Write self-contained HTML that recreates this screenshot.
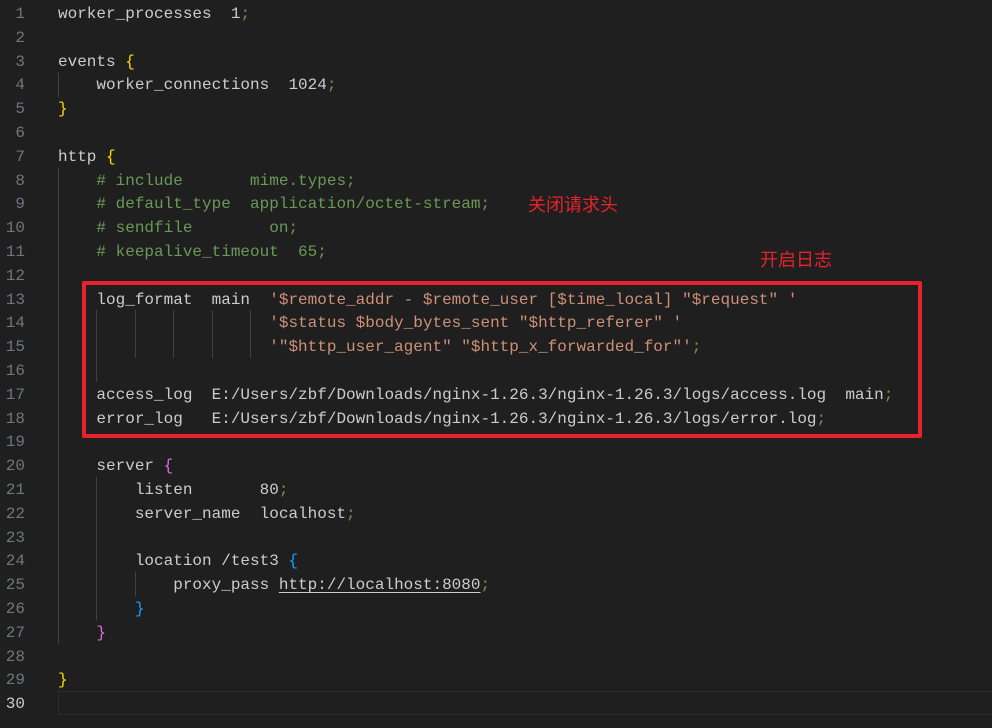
<!DOCTYPE html>
<html><head><meta charset="utf-8"><style>
html,body{margin:0;padding:0;background:#1f1f1f;width:992px;height:728px;overflow:hidden;}
.ln{position:absolute;left:0;width:25px;text-align:right;font:16px "Liberation Mono",monospace;color:#6e7681;height:24px;line-height:24px;}
.c{position:absolute;left:58px;font:16px "Liberation Mono",monospace;color:#cccccc;white-space:pre;height:24px;line-height:24px;}
.s{color:#ce9178}.cm{color:#6a9955}.p{color:#6a9955}
.y{color:#ffd700}.m{color:#da70d6}.b{color:#179fff}
.g{position:absolute;width:1px;background:#404040;}
.u{text-decoration:underline;text-underline-offset:3px}
.zh{position:absolute;font:18px "Noto Sans CJK SC",sans-serif;color:#e8222b;line-height:20px}
</style></head><body>
<div style="position:absolute;left:58px;top:691px;width:934px;height:22px;border:1px solid #2c2c2c;border-right:none"></div>
<div class="g" style="left:58px;top:73px;height:24px"></div>
<div class="g" style="left:58px;top:168px;height:476px"></div>
<div class="g" style="left:96px;top:310px;height:72px"></div>
<div class="g" style="left:135px;top:310px;height:48px"></div>
<div class="g" style="left:173px;top:310px;height:48px"></div>
<div class="g" style="left:212px;top:310px;height:48px"></div>
<div class="g" style="left:250px;top:310px;height:48px"></div>
<div class="g" style="left:96px;top:477px;height:143px"></div>
<div class="g" style="left:135px;top:572px;height:24px"></div>
<script>
var L=[
'worker_processes  1<span class="p">;</span>','',
'events <span class="y">{</span>','    worker_connections  1024<span class="p">;</span>','<span class="y">}</span>','',
'http <span class="y">{</span>',
'    <span class="cm"># include       mime.types;</span>',
'    <span class="cm"># default_type  application/octet-stream;</span>',
'    <span class="cm"># sendfile        on;</span>',
'    <span class="cm"># keepalive_timeout  65;</span>','',
'    log_format  main  <span class="s">\'$remote_addr - $remote_user [$time_local] "$request" \'</span>',
'                      <span class="s">\'$status $body_bytes_sent "$http_referer" \'</span>',
'                      <span class="s">\'"$http_user_agent" "$http_x_forwarded_for"\'</span><span class="p">;</span>','',
'    access_log  E:/Users/zbf/Downloads/nginx-1.26.3/nginx-1.26.3/logs/access.log  main<span class="p">;</span>',
'    error_log   E:/Users/zbf/Downloads/nginx-1.26.3/nginx-1.26.3/logs/error.log<span class="p">;</span>','',
'    server <span class="m">{</span>','        listen       80<span class="p">;</span>','        server_name  localhost<span class="p">;</span>','',
'        location /test3 <span class="b">{</span>','            proxy_pass <span class="u">http://localhost:8080</span><span class="p">;</span>',
'        <span class="b">}</span>','    <span class="m">}</span>','','<span class="y">}</span>',''];
var h='';
for(var i=0;i<30;i++){var t=2+i*23.8;
h+='<div class="ln" style="top:'+t+'px'+(i==29?';color:#cccccc':'')+'">'+(i+1)+'</div>';
h+='<div class="c" style="top:'+t+'px">'+L[i]+'</div>';}
document.write(h);
</script>
<div style="position:absolute;left:82px;top:281px;width:832px;height:149px;border:4px solid #e8222b;border-radius:2px"></div>
<div class="zh" style="left:528px;top:194px">关闭请求头</div>
<div class="zh" style="left:760px;top:249px">开启日志</div>
</body></html>
